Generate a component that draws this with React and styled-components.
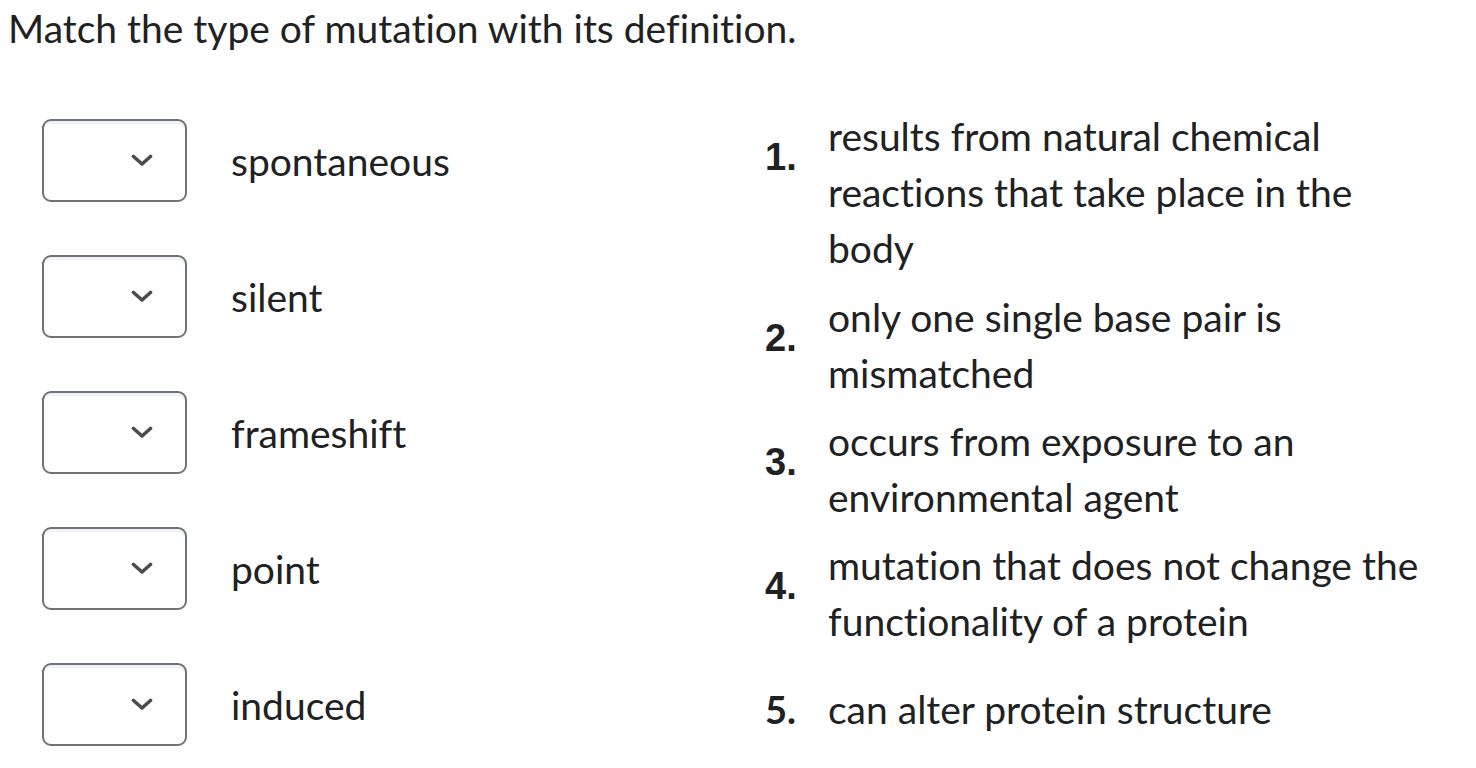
import React from "react";
import styled, { createGlobalStyle } from "styled-components";

const GlobalStyle = createGlobalStyle`
  html, body {
    margin: 0;
    padding: 0;
    background: #ffffff;
  }
  body {
    font-family: Lato, "Noto Sans", sans-serif;
    font-variant-ligatures: none;
    color: #202122;
  }
`;

const terms = ["spontaneous", "silent", "frameshift", "point", "induced"];

const definitions = [
  "results from natural chemical reactions that take place in the body",
  "only one single base pair is mismatched",
  "occurs from exposure to an environmental agent",
  "mutation that does not change the functionality of a protein",
  "can alter protein structure",
];

const Page = styled.div`
  padding: 0 0 0 8px;
`;

const Title = styled.h1`
  margin: 0;
  font-size: 39px;
  font-weight: 400;
  line-height: 56px;
`;

const Columns = styled.div`
  display: grid;
  grid-template-columns: 723px 665px;
  align-items: start;
  margin-top: 52px;
  padding-left: 34px;
`;

const TermList = styled.div`
  display: flex;
  flex-direction: column;
  gap: 53px;
  padding-top: 11px;
`;

const TermRow = styled.div`
  display: flex;
  align-items: center;
  gap: 44px;
`;

const SelectBox = styled.div`
  box-sizing: border-box;
  width: 145px;
  height: 83px;
  border: 2px solid #6f7376;
  border-radius: 9px;
  background: #ffffff;
  box-shadow: inset 0 3px 0 0 rgba(185, 194, 208, 0.22);
  display: flex;
  align-items: center;
  justify-content: flex-end;
  padding-right: 32px;
`;

const TermLabel = styled.span`
  font-size: 39px;
  line-height: 56px;
`;

const DefList = styled.ol`
  list-style: none;
  margin: 0;
  padding: 0;
`;

const DefItem = styled.li`
  display: flex;
  align-items: ${(p) => (p.$single ? "baseline" : "flex-start")};
  margin-top: ${(p) => p.$gap}px;
`;

const Num = styled.span`
  flex: 0 0 63px;
  font-family: ${(p) =>
    p.$single ? "Lato, sans-serif" : '"Liberation Sans", Arial, sans-serif'};
  font-size: ${(p) => (p.$single ? 38 : 38)}px;
  font-weight: 700;
  line-height: 56px;
  margin-top: ${(p) => (p.$single ? 0 : 21)}px;
  color: #202122;
`;

const DefText = styled.span`
  width: 604px;
  font-size: 39px;
  line-height: 56px;
`;

const Chevron = () => (
  <svg width="22" height="13" viewBox="0 0 22 13" fill="none">
    <path
      d="M2.5 2.5 L11 10 L19.5 2.5"
      stroke="#494c4e"
      strokeWidth="3.6"
      strokeLinecap="round"
      strokeLinejoin="round"
    />
  </svg>
);

const gaps = [0, 13, 12, 12, 32];

export default function App() {
  return (
    <Page>
      <GlobalStyle />
      <Title>Match the type of mutation with its definition.</Title>
      <Columns>
        <TermList>
          {terms.map((t) => (
            <TermRow key={t}>
              <SelectBox>
                <Chevron />
              </SelectBox>
              <TermLabel>{t}</TermLabel>
            </TermRow>
          ))}
        </TermList>
        <DefList>
          {definitions.map((d, i) => {
            const single = i === definitions.length - 1;
            return (
              <DefItem key={i} $gap={gaps[i]} $single={single}>
                <Num $single={single}>{i + 1}.</Num>
                <DefText>{d}</DefText>
              </DefItem>
            );
          })}
        </DefList>
      </Columns>
    </Page>
  );
}
